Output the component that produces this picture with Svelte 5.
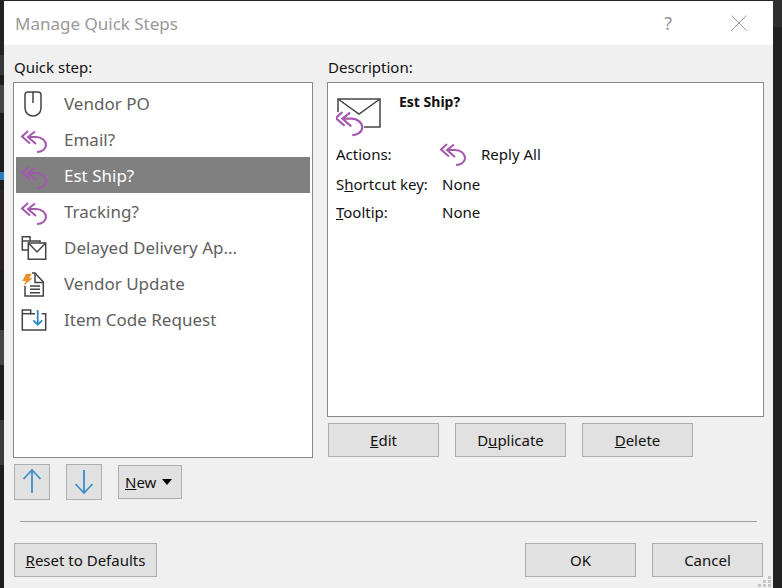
<script>
	const steps = [
		{ name: 'Vendor PO', icon: 'mouse' },
		{ name: 'Email?', icon: 'reply' },
		{ name: 'Est Ship?', icon: 'reply', selected: true },
		{ name: 'Tracking?', icon: 'reply' },
		{ name: 'Delayed Delivery Ap...', icon: 'folderMail' },
		{ name: 'Vendor Update', icon: 'doc' },
		{ name: 'Item Code Request', icon: 'folderDown' }
	];
</script>

{#snippet replyPaths()}
	<g fill="none" stroke="#a457ad" stroke-width="2">
		<path d="M9 5 L3 10.5 L11 17.5" />
		<path d="M16 5.5 L9 11 L17 18" />
		<path d="M9 11 H17 C23 11 27 15 27 19 C27 23 23 26 18 26" />
	</g>
{/snippet}

{#snippet stepIcon(icon)}
	<svg class="step-icon" viewBox="0 0 28 28" width="28" height="28">
		{#if icon === 'mouse'}
			<path d="M6 5 C6 3 7 2 9 2 H19 C21 2 22 3 22 5 V18 C22 23 18 26 14 26 C10 26 6 23 6 18 Z M14 2 V13" fill="none" stroke="#444" stroke-width="1.5" />
		{:else if icon === 'reply'}
			{@render replyPaths()}
		{:else if icon === 'folderMail'}
			<g fill="none" stroke="#444" stroke-width="1.5">
				<path d="M9 16 H3.3 V2.7 H11 V7 H21 V9" />
				<path d="M3.3 7 H11" />
				<path d="M9.3 9 H26.7 V25.3 H9.3 Z" fill="#fff" />
				<path d="M9.3 9 L18 18 L26.7 9" />
			</g>
		{:else if icon === 'doc'}
			<g fill="none" stroke="#444" stroke-width="1.5">
				<path d="M13 3 H16 L24.3 12 V26 H6 V16" />
				<path d="M16 3 V12.5 H24.3" />
				<path d="M11 16 H21 M11 19.3 H21 M11 22.7 H21" />
			</g>
			<path d="M7 3.7 H12.7 L10.3 8.3 H13.7 L4.3 16 L7 11 H3.3 Z" fill="#e8912d" />
		{:else}
			<g fill="none" stroke="#444" stroke-width="1.5">
				<path d="M16 7.7 H11.7 V4 H3.3 V24 H26.7 V7.7 H22.7" />
				<path d="M3.3 7.7 H11.7" />
			</g>
			<path d="M18.7 4 V18.3 M14.3 14.3 L18.7 18.7 L23.3 14.3" fill="none" stroke="#2e8bc9" stroke-width="1.8" />
		{/if}
	</svg>
{/snippet}

<div class="desktop">
	<div class="dialog">
		<header class="titlebar">
			<span class="title">Manage Quick Steps</span>
			<span class="help">?</span>
			<svg class="close" viewBox="0 0 16 16" width="16" height="16">
				<path d="M0.5 0.5 L15.5 15.5 M15.5 0.5 L0.5 15.5" stroke="#999" stroke-width="1" fill="none" />
			</svg>
		</header>

		<div class="body">
			<div class="columns">
				<section class="left">
					<div class="label">Quick step:</div>
					<div class="step-list">
						{#each steps as step}
							<div class="step" class:selected={step.selected}>
								{@render stepIcon(step.icon)}
								<span>{step.name}</span>
							</div>
						{/each}
					</div>
					<div class="list-actions">
						<button class="arrow" aria-label="Move up">
							<svg viewBox="0 0 24 28" width="24" height="28">
								<path d="M12 25 V2 M3.5 11 L12 2 L20.5 11" fill="none" stroke="#3b8fc8" stroke-width="1.8" />
							</svg>
						</button>
						<button class="arrow" aria-label="Move down">
							<svg viewBox="0 0 24 28" width="24" height="28">
								<path d="M12 2 V25 M3.5 16 L12 25 L20.5 16" fill="none" stroke="#3b8fc8" stroke-width="1.8" />
							</svg>
						</button>
						<button class="new"><span><u>N</u>ew</span><i class="caret"></i></button>
					</div>
				</section>

				<section class="right">
					<div class="label">Description:</div>
					<div class="description">
						<div class="desc-head">
							<svg class="mail" viewBox="0 0 48 42" width="48" height="42">
								<path d="M2 14 V1 H44 V29 H28" fill="none" stroke="#444" stroke-width="1.5" />
								<path d="M2 1 L23 16 L44 1" fill="none" stroke="#444" stroke-width="1.5" />
								<g transform="translate(-3.5,8.5) scale(1.1)">
									{@render replyPaths()}
								</g>
							</svg>
							<strong>Est Ship?</strong>
						</div>
						<div class="desc-row actions">
							<span class="key">Actions:</span>
							<svg class="step-icon" viewBox="0 0 28 28" width="28" height="28">
								{@render replyPaths()}
							</svg>
							<span class="action-name">Reply All</span>
						</div>
						<div class="desc-row">
							<span class="key">S<u>h</u>ortcut key:</span>
							<span>None</span>
						</div>
						<div class="desc-row">
							<span class="key"><u>T</u>ooltip:</span>
							<span>None</span>
						</div>
					</div>
					<div class="desc-actions">
						<button><u>E</u>dit</button>
						<button>D<u>u</u>plicate</button>
						<button><u>D</u>elete</button>
					</div>
				</section>
			</div>

			<hr />

			<footer class="footer">
				<button class="reset"><u>R</u>eset to Defaults</button>
				<div class="confirm">
					<button>OK</button>
					<button>Cancel</button>
				</div>
			</footer>
		</div>

		<!-- size grip -->
		<svg class="grip" viewBox="0 0 14 12" width="14" height="12">
			<path d="M10 0 h3 v3 h-3 z M5 4 h3 v3 h-3 z M10 4 h3 v3 h-3 z M0 8 h3 v3 h-3 z M5 8 h3 v3 h-3 z M10 8 h3 v3 h-3 z" fill="#c6c6c6" />
		</svg>
	</div>
</div>

<style>
	:global(body) {
		margin: 0;
		background: #222;
	}

	.desktop {
		width: 782px;
		height: 588px;
		padding: 1px 9px 0 4px;
		box-sizing: border-box;
		overflow: hidden;
		font-family: 'Noto Sans', 'Open Sans', sans-serif;
		background:
			linear-gradient(#2e2e2e 0 27px, #222 27px) right top / 9px 100% no-repeat,
			linear-gradient(#222 0 55px, #383838 55px 75px, #1c1c1c 75px 85px, #444 85px 113px, #1e1e1e 113px 172px, #2f7fc0 172px 180px, #1e1e1e 180px 190px, #2a2020 190px 270px, #1e1e1e 270px 330px, #444 330px 365px, #1e1e1e 365px 420px, #3a3a3a 420px 465px, #1e1e1e 465px) left top / 4px 100% no-repeat,
			#242424;
	}

	.dialog {
		position: relative;
		height: 587px;
		display: flex;
		flex-direction: column;
		background: #f0f0f0;
	}

	.titlebar {
		height: 44px;
		flex: none;
		display: flex;
		align-items: center;
		padding: 0 26px 0 11px;
		background: #fff;
	}

	.title {
		flex: 1;
		font-size: 17px;
		color: #999;
	}

	.help {
		font-size: 18px;
		color: #999;
		margin-right: 59px;
	}

	.body {
		flex: 1;
		display: flex;
		flex-direction: column;
		padding: 0 9px 10px 9px;
	}

	.columns {
		display: flex;
		gap: 14px;
	}

	.label {
		height: 37px;
		box-sizing: border-box;
		padding: 12px 0 0 1px;
		font-size: 15px;
		line-height: 20px;
		color: #111;
	}

	.left {
		width: 300px;
	}

	.step-list {
		height: 376px;
		box-sizing: border-box;
		padding: 2px 2px;
		background: #fff;
		border: 1px solid #8a8a8a;
	}

	.step {
		height: 36px;
		display: flex;
		align-items: center;
		gap: 17px;
		padding-left: 3px;
		font-size: 17px;
		color: #606060;
	}

	.step .step-icon {
		margin-top: 2px;
	}

	.step.selected {
		background: #808080;
		color: #fff;
	}

	.step-icon {
		flex: none;
	}

	.list-actions {
		display: flex;
		align-items: center;
		gap: 16px;
		margin-top: 6px;
		padding-left: 1px;
	}

	button {
		height: 34px;
		padding: 0;
		background: #e1e1e1;
		border: 1px solid #adadad;
		border-radius: 0;
		font: inherit;
		font-size: 15px;
		color: #111;
	}

	.arrow {
		width: 36px;
		height: 36px;
		display: flex;
		align-items: center;
		justify-content: center;
	}

	.new {
		width: 64px;
		display: flex;
		align-items: center;
		gap: 6px;
		padding-left: 6px;
	}

	.caret {
		width: 0;
		height: 0;
		border-left: 5.5px solid transparent;
		border-right: 5.5px solid transparent;
		border-top: 6px solid #000;
	}

	.right {
		width: 437px;
	}

	.description {
		height: 335px;
		box-sizing: border-box;
		padding: 7px 0 0 8px;
		background: #fff;
		border: 1px solid #8a8a8a;
		font-size: 15px;
		color: #111;
	}

	.desc-head {
		display: flex;
		height: 48px;
	}

	.desc-head strong {
		margin: 2px 0 0 15px;
		font-size: 14px;
		line-height: 20px;
	}

	.mail {
		margin-top: 8px;
	}

	.desc-row {
		display: flex;
		align-items: center;
		height: 28px;
	}

	.desc-row.actions {
		height: 32px;
	}

	.desc-row.actions .key {
		width: 102px;
	}

	.desc-row.actions .step-icon {
		margin-bottom: 3px;
	}

	.key {
		width: 106px;
		flex: none;
	}

	.action-name {
		margin-left: 15px;
	}

	.desc-actions {
		display: flex;
		gap: 16px;
		margin-top: 6px;
		padding-left: 1px;
	}

	.desc-actions button,
	.confirm button {
		width: 111px;
	}

	hr {
		width: 737px;
		height: 1px;
		margin: 21px 0 21px 7px;
		border: 0;
		background: #a0a0a0;
	}

	.footer {
		display: flex;
		justify-content: space-between;
		padding: 0 1px;
		width: 751px;
		box-sizing: border-box;
	}

	.reset {
		width: 143px;
	}

	.confirm {
		display: flex;
		gap: 16px;
	}

	.grip {
		position: absolute;
		right: 1px;
		bottom: 0;
	}
</style>
